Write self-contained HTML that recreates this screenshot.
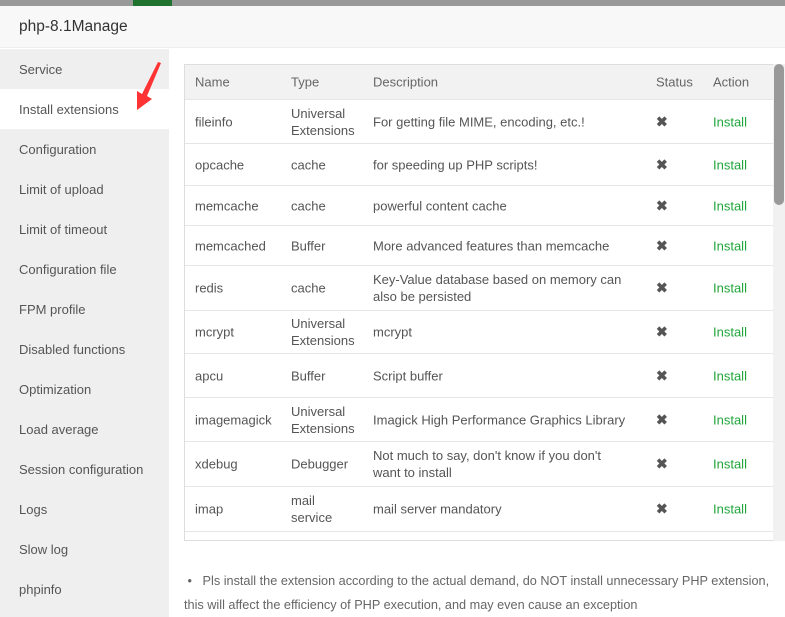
<!DOCTYPE html>
<html><head><style>
*{margin:0;padding:0;box-sizing:border-box}
body{width:785px;height:617px;overflow:hidden;background:#fff;font-family:"Liberation Sans",sans-serif;font-size:13px;color:#555;position:relative}
.top{position:absolute;left:0;top:0;width:785px;height:6px;background:#999}
.top i{position:absolute;left:133px;top:0;width:39px;height:6px;background:#20722f}
.hd{position:absolute;left:0;top:6px;width:785px;height:42px;background:#f8f8f8;border-bottom:1px solid #eee;font-size:15.5px;color:#333;padding:12px 0 0 19px}
.side{position:absolute;left:0;top:49px;width:169px;height:568px;background:#efefef}
.side div{height:40px;line-height:42px;padding-left:19px;color:#555;font-size:13px}
.side .on{background:#fff}
.tw{position:absolute;left:184px;top:64px;width:589px;height:477px;overflow:hidden;border:1px solid #ddd;border-right:none}
.r{position:absolute;left:0;width:589px;border-bottom:1px solid #e6e6e6}
.r span{position:absolute;top:50%;transform:translateY(-50%);line-height:17px}
.h{background:#f2f2f2;color:#666}
.c1{left:10px}.c2{left:106px}.c3{left:188px;width:250px}.c4{left:471px;color:#555;font-weight:bold;font-size:14px}.c5{left:528px;color:#20a53a}
.sb{position:absolute;left:773px;top:64px;width:12px;height:477px;background:#f1f1f1}
.sb i{position:absolute;left:1px;top:0;width:10px;height:141px;background:#999;border-radius:5px}
.note{position:absolute;left:184px;top:569px;width:600px;line-height:24px;color:#666;font-size:12.7px}
</style></head><body>
<div class="top"><i></i></div>
<div class="hd">php-8.1Manage</div>
<div class="side">
<div>Service</div><div class="on">Install extensions</div><div>Configuration</div><div>Limit of upload</div><div>Limit of timeout</div><div>Configuration file</div><div>FPM profile</div><div>Disabled functions</div><div>Optimization</div><div>Load average</div><div>Session configuration</div><div>Logs</div><div>Slow log</div><div>phpinfo</div>
</div>
<svg style="position:absolute;left:130px;top:60px" width="35" height="55"><path d="M31 3 L17 36 L22 39 L7 50 L7 31 L12 34 L28 2 Z" fill="#f33"/></svg>
<div class="tw">
<div class="r h" style="top:0;height:35px"><span class="c1">Name</span><span class="c2">Type</span><span class="c3">Description</span><span class="c4" style="font-weight:normal;font-size:13px;color:#666">Status</span><span class="c5" style="color:#666">Action</span></div>
<div class="r" style="top:35px;height:44px"><span class="c1">fileinfo</span><span class="c2">Universal<br>Extensions</span><span class="c3">For getting file MIME, encoding, etc.!</span><span class="c4">✖</span><span class="c5">Install</span></div>
<div class="r" style="top:79px;height:42px"><span class="c1">opcache</span><span class="c2">cache</span><span class="c3">for speeding up PHP scripts!</span><span class="c4">✖</span><span class="c5">Install</span></div>
<div class="r" style="top:121px;height:40px"><span class="c1">memcache</span><span class="c2">cache</span><span class="c3">powerful content cache</span><span class="c4">✖</span><span class="c5">Install</span></div>
<div class="r" style="top:161px;height:40px"><span class="c1">memcached</span><span class="c2">Buffer</span><span class="c3">More advanced features than memcache</span><span class="c4">✖</span><span class="c5">Install</span></div>
<div class="r" style="top:201px;height:45px"><span class="c1">redis</span><span class="c2">cache</span><span class="c3">Key-Value database based on memory can also be persisted</span><span class="c4">✖</span><span class="c5">Install</span></div>
<div class="r" style="top:246px;height:43px"><span class="c1">mcrypt</span><span class="c2">Universal<br>Extensions</span><span class="c3">mcrypt</span><span class="c4">✖</span><span class="c5">Install</span></div>
<div class="r" style="top:289px;height:44px"><span class="c1">apcu</span><span class="c2">Buffer</span><span class="c3">Script buffer</span><span class="c4">✖</span><span class="c5">Install</span></div>
<div class="r" style="top:333px;height:44px"><span class="c1">imagemagick</span><span class="c2">Universal<br>Extensions</span><span class="c3" style="width:275px">Imagick High Performance Graphics Library</span><span class="c4">✖</span><span class="c5">Install</span></div>
<div class="r" style="top:377px;height:45px"><span class="c1">xdebug</span><span class="c2">Debugger</span><span class="c3">Not much to say, don't know if you don't want to install</span><span class="c4">✖</span><span class="c5">Install</span></div>
<div class="r" style="top:422px;height:45px"><span class="c1">imap</span><span class="c2">mail<br>service</span><span class="c3">mail server mandatory</span><span class="c4">✖</span><span class="c5">Install</span></div>
</div>
<div class="sb"><i></i></div>
<div class="note">&nbsp;•&nbsp;&nbsp; Pls install the extension according to the actual demand, do NOT install unnecessary PHP extension, this will affect the efficiency of PHP execution, and may even cause an exception</div>
</body></html>
